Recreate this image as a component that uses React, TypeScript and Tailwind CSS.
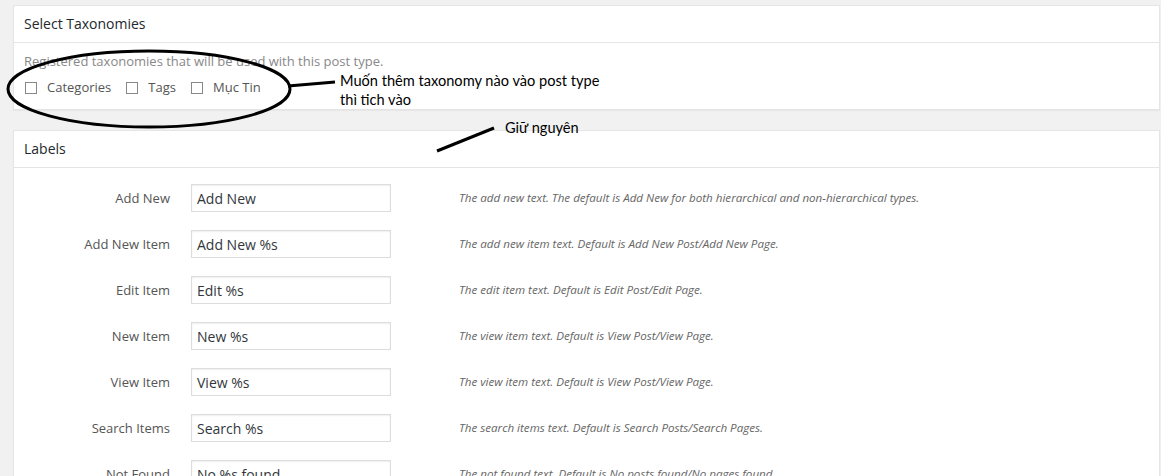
import React from "react";

const rows: [string, string, string][] = [
  ["Add New", "Add New", "The add new text. The default is Add New for both hierarchical and non-hierarchical types."],
  ["Add New Item", "Add New %s", "The add new item text. Default is Add New Post/Add New Page."],
  ["Edit Item", "Edit %s", "The edit item text. Default is Edit Post/Edit Page."],
  ["New Item", "New %s", "The view item text. Default is View Post/View Page."],
  ["View Item", "View %s", "The view item text. Default is View Post/View Page."],
  ["Search Items", "Search %s", "The search items text. Default is Search Posts/Search Pages."],
  ["Not Found", "No %s found", "The not found text. Default is No posts found/No pages found."],
];

function Check({ label }: { label: string }) {
  return (
    <label className="flex items-center gap-[10px]">
      <span className="block w-[12px] h-[12px] border border-[#888] bg-white" />
      <span className="text-[13px] text-[#555]">{label}</span>
    </label>
  );
}

export default function App() {
  return (
    <div
      className="relative w-[1161px] h-[476px] overflow-hidden bg-[#f1f1f1] pt-[5px] pl-[13px] pr-[1px]"
      style={{ fontFamily: '"Open Sans", "Noto Sans", sans-serif' }}
    >
      {/* Panel 1 */}
      <div className="bg-white border border-[#e5e5e5] shadow-[0_1px_1px_rgba(0,0,0,0.04)]">
        <div className="h-[37px] border-b border-[#e5e5e5] flex items-center px-[10px] pb-[1px]">
          <span className="text-[14px] text-[#23282d]">Select Taxonomies</span>
        </div>
        <div className="h-[66px] px-[10px] pt-[9px]">
          <div className="text-[13px] text-[#888] leading-[18px]">
            Registered taxonomies that will be used with this post type.
          </div>
          <div className="flex items-center gap-[15px] mt-[8px] pl-[1px]">
            <Check label="Categories" />
            <Check label="Tags" />
            <Check label="Mục Tin" />
          </div>
        </div>
      </div>

      {/* Panel 2 */}
      <div className="mt-[20px] bg-white border border-[#e5e5e5] shadow-[0_1px_1px_rgba(0,0,0,0.04)]">
        <div className="h-[37px] border-b border-[#e5e5e5] flex items-center px-[10px] pb-[2px]">
          <span className="text-[14px] text-[#23282d]">Labels</span>
        </div>
        <div className="pt-[16px] flex flex-col gap-[18px]">
          {rows.map(([l, v, d]) => (
            <div key={l} className="flex items-center h-[28px]">
              <div className="w-[156px] text-right text-[13px] text-[#555] pt-[1px]">{l}</div>
              <div className="ml-[21px] w-[200px] h-[28px] border border-[#ddd] shadow-[inset_0_1px_2px_rgba(0,0,0,0.07)] flex items-center px-[5px] text-[14px] text-[#32373c]">
                {v}
              </div>
              <div className="ml-[68px] text-[11.6px] italic text-[#666]">{d}</div>
            </div>
          ))}
        </div>
      </div>

      {/* Annotations */}
      <svg className="absolute left-0 top-0 pointer-events-none" width="1161" height="476">
        <ellipse cx="149" cy="89" rx="141" ry="38" fill="none" stroke="#000" strokeWidth="3" />
        <path d="M288 86 L335 82" stroke="#000" strokeWidth="3" fill="none" />
        <path d="M437 151 L494 128" stroke="#000" strokeWidth="3" fill="none" />
      </svg>
      <div
        className="absolute left-[340px] top-[71px] text-[14.6px] leading-[19px] text-black"
        style={{ fontFamily: 'Lato, "Noto Sans", sans-serif' }}
      >
        <div>Muốn thêm taxonomy nào vào post type</div>
        <div>thì tich vào</div>
      </div>
      <div
        className="absolute left-[505px] top-[118px] text-[14.6px] leading-[19px] text-black"
        style={{ fontFamily: 'Lato, "Noto Sans", sans-serif' }}
      >
        Giữ nguyên
      </div>
    </div>
  );
}
